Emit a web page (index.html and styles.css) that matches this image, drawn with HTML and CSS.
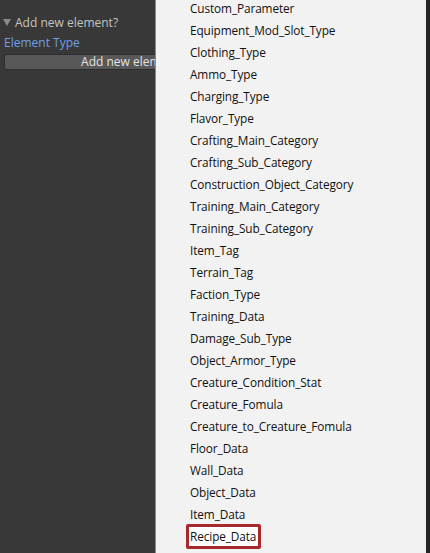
FILE: index.html
```html
<!DOCTYPE html>
<html>
<head>
<meta charset="utf-8">
<link rel="stylesheet" href="styles.css">
</head>
<body>
<div class="panel">
  <div class="foldout"><span class="tri"></span><span>Add new element?</span></div>
  <div class="label">Element Type</div>
  <div class="btn">Add new element</div>
</div>
<div class="menu">
  <ul class="items">
    <li>Custom_Parameter</li>
    <li>Equipment_Mod_Slot_Type</li>
    <li>Clothing_Type</li>
    <li>Ammo_Type</li>
    <li>Charging_Type</li>
    <li>Flavor_Type</li>
    <li>Crafting_Main_Category</li>
    <li>Crafting_Sub_Category</li>
    <li>Construction_Object_Category</li>
    <li>Training_Main_Category</li>
    <li>Training_Sub_Category</li>
    <li>Item_Tag</li>
    <li>Terrain_Tag</li>
    <li>Faction_Type</li>
    <li>Training_Data</li>
    <li>Damage_Sub_Type</li>
    <li>Object_Armor_Type</li>
    <li>Creature_Condition_Stat</li>
    <li>Creature_Fomula</li>
    <li>Creature_to_Creature_Fomula</li>
    <li>Floor_Data</li>
    <li>Wall_Data</li>
    <li>Object_Data</li>
    <li>Item_Data</li>
    <li class="hl"><span>Recipe_Data</span></li>
  </ul>
</div>
</body>
</html>
```
FILE: styles.css
```css
html, body {
  margin: 0;
  padding: 0;
  background: #383838;
  height: 553px;
  overflow: hidden;
  font-family: "Open Sans", "Noto Sans", sans-serif;
  font-size: 12px;
}
.panel {
  padding-top: 14px;
}
.foldout {
  display: flex;
  align-items: center;
  height: 16px;
  color: #c4c4c4;
  padding-left: 3px;
}
.tri {
  width: 0;
  height: 0;
  border-left: 4px solid transparent;
  border-right: 4px solid transparent;
  border-top: 7px solid #8a8a8a;
  margin-right: 4px;
}
.label {
  margin-top: 5px;
  height: 16px;
  line-height: 16px;
  padding-left: 4px;
  color: #6f9fe8;
}
.btn {
  margin: 3px 0 0 4px;
  width: 250px;
  height: 14px;
  line-height: 14px;
  background: #585858;
  border: 1px solid #2e2e2e;
  border-radius: 3px;
  color: #e2e2e2;
  text-align: center;
}
.menu {
  position: absolute;
  left: 155px;
  top: 0;
  width: 270px;
  height: 553px;
  background: #f2f2f2;
  border-left: 1px solid #8a8a8a;
  overflow: hidden;
}
body::after {
  content: "";
  position: absolute;
  left: 426px;
  top: 0;
  width: 4px;
  height: 553px;
  background: #252525;
}
.items {
  list-style: none;
  margin: -3px 0 0 0;
  padding: 0;
}
.items li {
  height: 22px;
  line-height: 22px;
  padding-left: 34px;
  font-size: 11.8px;
  letter-spacing: -0.1px;
  color: #111;
}
.items li.hl span {
  display: inline-block;
  margin-left: -4px;
  margin-top: -1px;
  padding: 0 2px 0 1px;
  line-height: 19px;
  background: #fff;
  border: 3px solid #a8282c;
  border-radius: 2px;
}
```
